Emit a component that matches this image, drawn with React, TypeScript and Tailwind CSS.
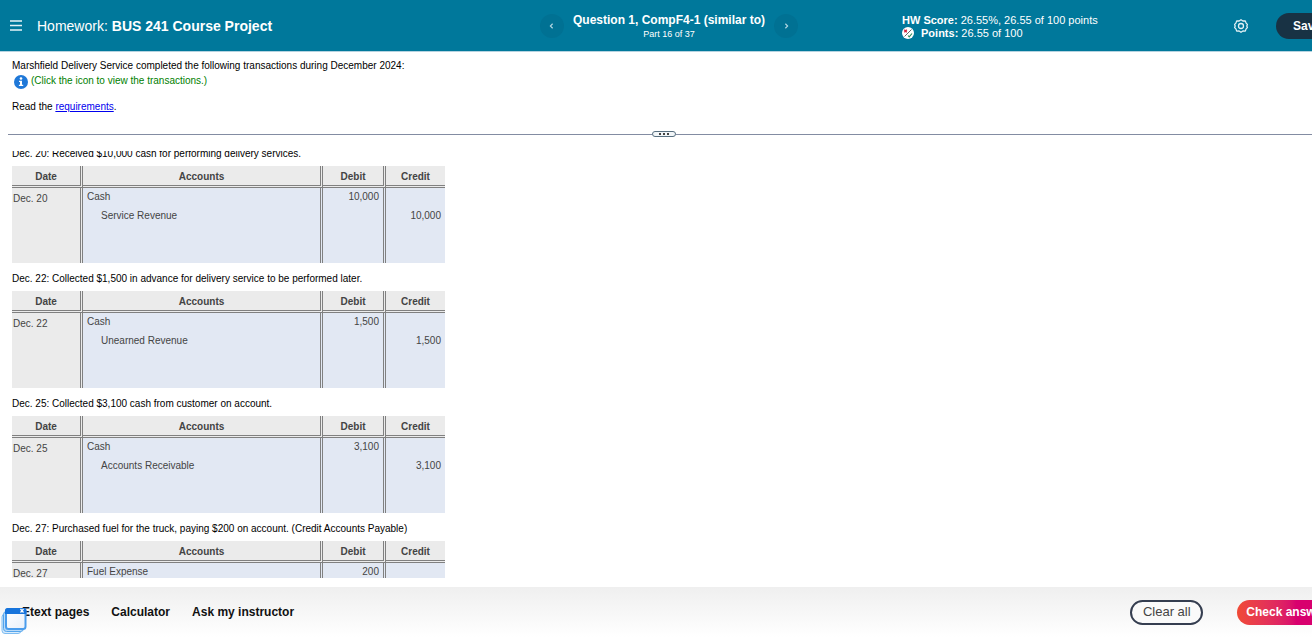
import React from "react";

type Entry = {
  date: string;
  caption: string;
  debitAccount: string;
  creditAccount: string;
  amount: string;
};

const entries: Entry[] = [
  { date: "Dec. 20", caption: "Dec. 20: Received $10,000 cash for performing delivery services.", debitAccount: "Cash", creditAccount: "Service Revenue", amount: "10,000" },
  { date: "Dec. 22", caption: "Dec. 22: Collected $1,500 in advance for delivery service to be performed later.", debitAccount: "Cash", creditAccount: "Unearned Revenue", amount: "1,500" },
  { date: "Dec. 25", caption: "Dec. 25: Collected $3,100 cash from customer on account.", debitAccount: "Cash", creditAccount: "Accounts Receivable", amount: "3,100" },
  { date: "Dec. 27", caption: "Dec. 27: Purchased fuel for the truck, paying $200 on account. (Credit Accounts Payable)", debitAccount: "Fuel Expense", creditAccount: "", amount: "200" },
];

function Journal({ entry }: { entry: Entry }) {
  const line = "border-r-[3px] border-double border-[#808080]";
  const head = "h-[22px] border-b-[3px] border-double border-[#808080] bg-[#ebebeb] p-0 pt-[3px] text-center font-bold";
  return (
    <section>
      <h2 className="flex h-7 items-center pt-1 text-black">{entry.caption}</h2>
      <table className="w-[433px] table-fixed border-separate border-spacing-0 bg-[#e2e8f3] text-[#444]">
        <colgroup>
          <col className="w-[71px]" />
          <col className="w-[240px]" />
          <col className="w-[63px]" />
          <col className="w-[59px]" />
        </colgroup>
        <thead>
          <tr>
            <th scope="col" className={`${head} border-r-[3px]`}>Date</th>
            <th scope="col" className={`${head} border-r-[3px]`}>Accounts</th>
            <th scope="col" className={`${head} border-r-[3px]`}>Debit</th>
            <th scope="col" className={head}>Credit</th>
          </tr>
        </thead>
        <tbody>
          <tr className="h-[18px]">
            <td rowSpan={4} className={`${line} bg-[#ebebeb] pt-[5px] pb-1 pl-px align-top`}>{entry.date}</td>
            <td className={`${line} p-0 pl-1`}>{entry.debitAccount}</td>
            <td className={`${line} p-0 pr-1 text-right`}>{entry.amount}</td>
            <td className="p-0" />
          </tr>
          <tr className="h-[19px]">
            <td className={`${line} p-0 pl-[18px]`}>{entry.creditAccount}</td>
            <td className={`${line} p-0`} />
            <td className="p-0 pr-1 text-right">{entry.creditAccount && entry.amount}</td>
          </tr>
          <tr className="h-[19px]">
            <td className={`${line} p-0`} />
            <td className={`${line} p-0`} />
            <td className="p-0" />
          </tr>
          <tr className="h-[19px]">
            <td className={`${line} p-0`} />
            <td className={`${line} p-0`} />
            <td className="p-0" />
          </tr>
        </tbody>
      </table>
    </section>
  );
}

function Chevron({ left }: { left?: boolean }) {
  return (
    <svg viewBox="0 0 6 8" className="h-[6px] w-[5px]" fill="none" stroke="#b5d8e3" strokeWidth="1.5" aria-hidden="true">
      <path d={left ? "M4.5 1 1.5 4l3 3" : "M1.5 1l3 3-3 3"} />
    </svg>
  );
}

function Header() {
  return (
    <header className="grid h-[52px] shrink-0 grid-cols-[1fr_auto_1fr] items-center border-b border-[#b5d3e0] bg-[#00789b] text-white">
      <div className="flex items-center pl-[10px]">
        <button aria-label="Menu" className="flex">
          <svg viewBox="0 0 12 11" className="h-[11px] w-3" stroke="#e6f3f7" strokeWidth="1.4" aria-hidden="true">
            <path d="M0 1h12M0 5.5h12M0 10h12" />
          </svg>
        </button>
        <h1 className="flex items-center gap-1 pl-[15px] text-[14px] leading-4">
          <span>Homework:</span>
          <strong>BUS 241 Course Project</strong>
        </h1>
      </div>

      <nav aria-label="Question" className="flex items-center gap-[9px]">
        <button aria-label="Previous" className="flex size-6 items-center justify-center rounded-full bg-[#007193]">
          <Chevron left />
        </button>
        <div className="pt-px text-center">
          <div className="text-[12px] leading-[15px] font-bold">Question 1, CompF4-1 (similar to)</div>
          <div className="text-[9px] leading-3">Part 16 of 37</div>
        </div>
        <button aria-label="Next" className="flex size-6 items-center justify-center rounded-full bg-[#007193]">
          <Chevron />
        </button>
      </nav>

      <div className="flex items-center justify-end">
        <div className="mr-auto pt-[2px] pl-[104px] text-[11px] leading-[13px]">
          <div><strong>HW Score:</strong> 26.55%, 26.55 of 100 points</div>
          <div className="flex items-center">
            <svg viewBox="0 0 12 12" className="mr-[7px] size-3" aria-hidden="true">
              <circle cx="6" cy="6" r="6" fill="#fff" />
              <path d="M2.3 2.8l2.5 2.500M4.800 2.800L2.300 5.300" stroke="#d4213d" strokeWidth="1.300" />
              <path d="M2.500 9.500l7-7" stroke="#555" strokeWidth=".9" />
              <path d="M6 8.500l1.200 1.300L10 6.500" stroke="#2e8a57" strokeWidth="1.100" fill="none" />
            </svg>
            <span><strong>Points:</strong> 26.55 of 100</span>
          </div>
        </div>
        <button aria-label="Settings" className="mr-7 flex">
          <svg viewBox="0 0 14 14" className="size-[14px]" fill="none" stroke="#e2f1f5" strokeWidth="1.300" strokeLinejoin="round" aria-hidden="true">
            <path d="M7 .7l1.900 1.300 2.400-.1.800 2.200 1.300 1.300L12.800 7l.6 1.600-1.300 1.300-.8 2.200-2.400-.1L7 13.300 5.100 12l-2.400.1-.8-2.200L.6 8.600 1.200 7 .6 5.400l1.300-1.300.8-2.200 2.400.1z" />
            <circle cx="7" cy="7" r="2.500" />
          </svg>
        </button>
        <button className="h-[26px] rounded-full bg-[#183244] px-[17px] text-[12px] font-bold">Save</button>
      </div>
    </header>
  );
}

function WindowsIcon() {
  return (
    <svg viewBox="0 0 26 28" className="absolute bottom-[2px] left-px h-7 w-[26px]" aria-hidden="true">
      <defs>
        <linearGradient id="pane" x1="0" y1="0" x2="1" y2="1">
          <stop offset="0" stopColor="#fff" />
          <stop offset="1" stopColor="#e9f0fa" />
        </linearGradient>
      </defs>
      <rect x="1" y="7" width="19" height="19.500" rx="3" fill="#d9ecfc" stroke="#7dbcf2" />
      <rect x="2.500" y="4.500" width="20" height="20" rx="3" fill="#b9dbf9" stroke="#55a5ec" />
      <rect x="5" y="2" width="19.500" height="20" rx="2.500" fill="url(#pane)" stroke="#4a9cec" strokeWidth="2" />
      <path d="M4 7V3.500Q4 1 6.500 1h16.500Q25.500 1 25.500 3.500V7z" fill="#1774dc" />
      <path d="M19.500 2l3 3.500M22.500 2l-3 3.500" stroke="#fff" strokeWidth="1.200" />
    </svg>
  );
}

export default function App() {
  return (
    <div className="h-screen overflow-hidden bg-white font-['Liberation_Sans',Arial,sans-serif] text-[10px] leading-3">
      <div className="flex h-full min-w-[1338px] flex-col">
        <Header />

        <main className="flex min-h-0 flex-1 flex-col">
          <div className="pt-2 pl-3 text-black">
            <p>Marshfield Delivery Service completed the following transactions during December 2024:</p>
            <div className="flex h-[18px] items-center pl-[2px]">
              <button className="flex items-center gap-[3px] text-[#008000]">
                <svg viewBox="0 0 14 14" className="mt-[2px] size-[14px]" aria-hidden="true">
                  <circle cx="7" cy="7" r="7" fill="#1f78d8" />
                  <circle cx="7" cy="3.500" r="1.300" fill="#fff" />
                  <path d="M5 5.800h3v4h1.200V11H4.900V9.800H6V7H5z" fill="#fff" />
                </svg>
                (Click the icon to view the transactions.)
              </button>
            </div>
            <p className="pt-[11px]">
              Read the <a href="#requirements" className="text-[#0000ee] underline">requirements</a>.
            </p>
          </div>

          <div className="mt-[18px] mr-[18px] ml-2 flex items-center">
            <div className="h-px flex-1 bg-[#838ca2]" />
            <button aria-label="Resize panels" className="flex h-[6px] w-6 items-center justify-center gap-[2px] rounded-[3px] border border-[#586f80] bg-[#f2f6f8]">
              <span className="size-[2px] bg-[#444]" />
              <span className="size-[2px] bg-[#444]" />
              <span className="size-[2px] bg-[#444]" />
            </button>
            <div className="h-px flex-1 bg-[#838ca2]" />
          </div>

          <div className="mt-[14px] mb-[9px] min-h-0 flex-1 overflow-hidden pl-3">
            <div className="-mt-[13px]">
              {entries.map((entry) => (
                <Journal key={entry.date} entry={entry} />
              ))}
            </div>
          </div>
        </main>

        <footer className="relative flex h-[50px] shrink-0 items-center bg-linear-to-b from-[#efefef] to-white pr-[2px] pl-[22px] text-[12px]">
          <nav aria-label="Tools" className="flex gap-[22px] font-bold text-[#111]">
            <a href="#etext">Etext pages</a>
            <a href="#calculator">Calculator</a>
            <a href="#instructor">Ask my instructor</a>
          </nav>
          <div className="ml-auto flex gap-[34px]">
            <button className="h-[25px] w-[73px] rounded-full border-2 border-[#353e50] bg-[#fafafa] text-[13px] text-[#444]">Clear all</button>
            <button className="h-[25px] rounded-full bg-linear-to-r from-[#f04a35] to-[#d8006e] to-60% px-[9px] font-bold whitespace-nowrap text-white">Check answer</button>
          </div>
          <WindowsIcon />
        </footer>
      </div>
    </div>
  );
}
